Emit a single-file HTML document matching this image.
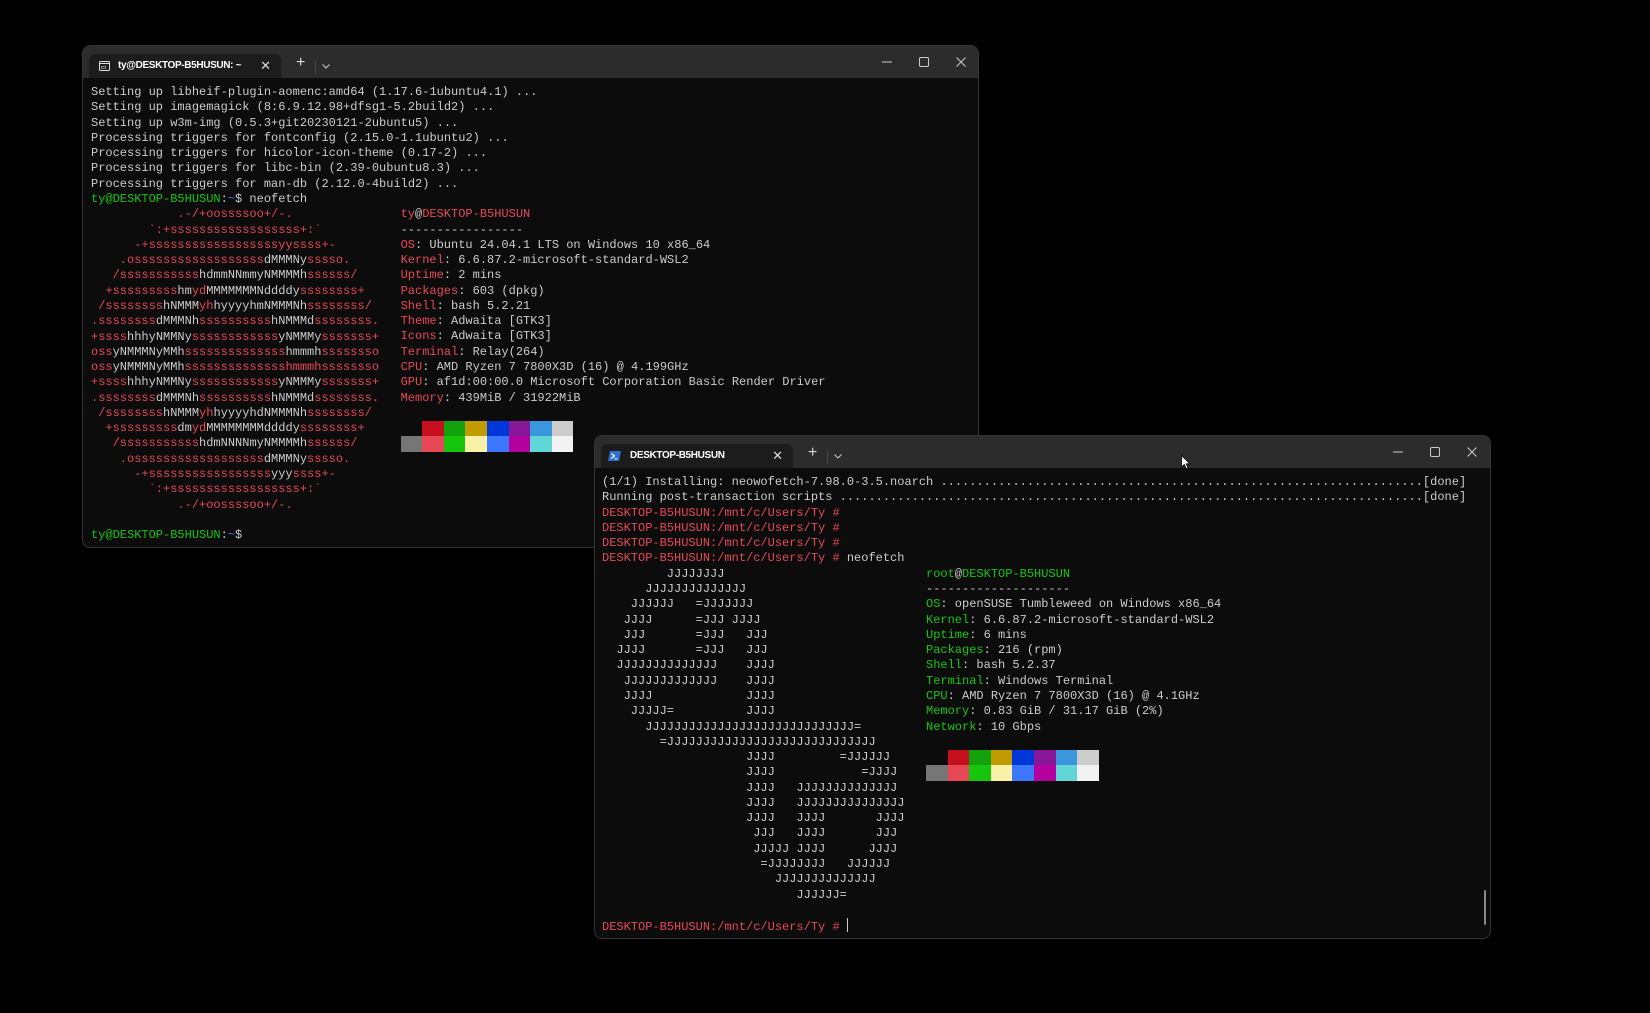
<!DOCTYPE html>
<html><head><meta charset="utf-8">
<style>
*{margin:0;padding:0;box-sizing:border-box}
html,body{width:1650px;height:1013px;background:#000;overflow:hidden;position:relative}
.win{position:absolute;background:#0c0c0c;border:1px solid #333;border-radius:8px;overflow:hidden}
.tb{position:absolute;left:0;top:0;right:0;height:32px;background:#2c2c2c}
.tab{position:absolute;top:8px;height:24px;background:#1c1c1c;border-radius:6px 6px 0 0;color:#fff;font:600 10px "Liberation Sans",sans-serif;line-height:24px;letter-spacing:-0.35px}
.tab .t{position:absolute;left:29px;top:0;white-space:nowrap}
.tab .x{position:absolute;right:10px;top:0;font-size:13px;font-weight:400;color:#ddd;letter-spacing:0}
.plus{position:absolute;top:8px;height:24px;line-height:24px;color:#ddd;font:16px "Liberation Sans",sans-serif}
.sep{position:absolute;top:14px;width:1px;height:14px;background:#444}
.term{position:absolute;font:12px "Liberation Mono",monospace;line-height:15.28px;color:#cccccc;white-space:pre}
.r{color:#e74856}.g{color:#16c60c}.b{color:#3b78ff}.w{color:#cccccc}
.c{display:inline-block;width:21.6px;height:15.28px;vertical-align:top}
</style></head><body>

<!-- Window 1 -->
<div class="win" style="left:82px;top:45px;width:897px;height:503px">
  <div class="tb"></div>
  <div class="tab" style="left:6px;width:192px">
    <svg style="position:absolute;left:10px;top:7px" width="11" height="10" viewBox="0 0 11 10"><rect x="0.5" y="0.5" width="10" height="9" rx="1" fill="none" stroke="#ddd"/><line x1="0.5" y1="2.5" x2="10.5" y2="2.5" stroke="#ddd"/><text x="2" y="8" font-size="4.5" fill="#ddd" font-family="Liberation Sans">C:\</text></svg>
    <span class="t">ty@DESKTOP-B5HUSUN: ~</span><span class="x">✕</span>
  </div>
  <div class="plus" style="left:213px">+</div>
  <div class="sep" style="left:232px"></div>
  <svg style="position:absolute;left:239px;top:18px" width="8" height="5" viewBox="0 0 8 5"><path d="M0.5 0.5L4 4L7.5 0.5" fill="none" stroke="#ccc"/></svg>
  <svg style="position:absolute;left:799px;top:15px" width="10" height="2"><line x1="0" y1="1" x2="10" y2="1" stroke="#ccc"/></svg>
  <svg style="position:absolute;left:836px;top:11px" width="10" height="10"><rect x="0.5" y="0.5" width="9" height="9" rx="1.5" fill="none" stroke="#ccc"/></svg>
  <svg style="position:absolute;left:873px;top:11px" width="10" height="10"><path d="M0.5 0.5L9.5 9.5M9.5 0.5L0.5 9.5" stroke="#ccc"/></svg>

  <div class="term" style="left:8px;top:39px">Setting up libheif-plugin-aomenc:amd64 (1.17.6-1ubuntu4.1) ...
Setting up imagemagick (8:6.9.12.98+dfsg1-5.2build2) ...
Setting up w3m-img (0.5.3+git20230121-2ubuntu5) ...
Processing triggers for fontconfig (2.15.0-1.1ubuntu2) ...
Processing triggers for hicolor-icon-theme (0.17-2) ...
Processing triggers for libc-bin (2.39-0ubuntu8.3) ...
Processing triggers for man-db (2.12.0-4build2) ...
<span class="g">ty@DESKTOP-B5HUSUN</span>:<span class="b">~</span>$ neofetch
<span class="r">            .-/+oossssoo+/-.</span>
<span class="r">        `:+ssssssssssssssssss+:`</span>
<span class="r">      -+ssssssssssssssssssyyssss+-</span>
<span class="r">    .ossssssssssssssssss</span>dMMMNy<span class="r">sssso.</span>
<span class="r">   /sssssssssss</span>hdmmNNmmyNMMMMh<span class="r">ssssss/</span>
<span class="r">  +sssssssss</span>hm<span class="r">yd</span>MMMMMMMNddddy<span class="r">ssssssss+</span>
<span class="r"> /ssssssss</span>hNMMM<span class="r">yh</span>hyyyyhmNMMMNh<span class="r">ssssssss/</span>
<span class="r">.ssssssss</span>dMMMNh<span class="r">ssssssssss</span>hNMMMd<span class="r">ssssssss.</span>
<span class="r">+ssss</span>hhhyNMMNy<span class="r">ssssssssssss</span>yNMMMy<span class="r">sssssss+</span>
<span class="r">oss</span>yNMMMNyMMh<span class="r">ssssssssssssss</span>hmmmh<span class="r">ssssssso</span>
<span class="r">oss</span>yNMMMNyMMh<span class="r">sssssssssssssshmmmhssssssso</span>
<span class="r">+ssss</span>hhhyNMMNy<span class="r">ssssssssssss</span>yNMMMy<span class="r">sssssss+</span>
<span class="r">.ssssssss</span>dMMMNh<span class="r">ssssssssss</span>hNMMMd<span class="r">ssssssss.</span>
<span class="r"> /ssssssss</span>hNMMM<span class="r">yh</span>hyyyyhdNMMMNh<span class="r">ssssssss/</span>
<span class="r">  +sssssssss</span>dm<span class="r">yd</span>MMMMMMMMddddy<span class="r">ssssssss+</span>
<span class="r">   /sssssssssss</span>hdmNNNNmyNMMMMh<span class="r">ssssss/</span>
<span class="r">    .ossssssssssssssssss</span>dMMMNy<span class="r">sssso.</span>
<span class="r">      -+sssssssssssssssss</span>yyy<span class="r">ssss+-</span>
<span class="r">        `:+ssssssssssssssssss+:`</span>
<span class="r">            .-/+oossssoo+/-.</span>

<span class="g">ty@DESKTOP-B5HUSUN</span>:<span class="b">~</span>$</div>

  <div class="term" style="left:317.6px;top:161.24px"><span class="r">ty</span>@<span class="r">DESKTOP-B5HUSUN</span>
-----------------
<span class="r">OS</span>: Ubuntu 24.04.1 LTS on Windows 10 x86_64
<span class="r">Kernel</span>: 6.6.87.2-microsoft-standard-WSL2
<span class="r">Uptime</span>: 2 mins
<span class="r">Packages</span>: 603 (dpkg)
<span class="r">Shell</span>: bash 5.2.21
<span class="r">Theme</span>: Adwaita [GTK3]
<span class="r">Icons</span>: Adwaita [GTK3]
<span class="r">Terminal</span>: Relay(264)
<span class="r">CPU</span>: AMD Ryzen 7 7800X3D (16) @ 4.199GHz
<span class="r">GPU</span>: af1d:00:00.0 Microsoft Corporation Basic Render Driver
<span class="r">Memory</span>: 439MiB / 31922MiB

<span class="c" style="background:#0c0c0c"></span><span class="c" style="background:#c50f1f"></span><span class="c" style="background:#13a10e"></span><span class="c" style="background:#c19c00"></span><span class="c" style="background:#0037da"></span><span class="c" style="background:#881798"></span><span class="c" style="background:#3a96dd"></span><span class="c" style="background:#cccccc"></span>
<span class="c" style="background:#767676"></span><span class="c" style="background:#e74856"></span><span class="c" style="background:#16c60c"></span><span class="c" style="background:#f9f1a5"></span><span class="c" style="background:#3b78ff"></span><span class="c" style="background:#b4009e"></span><span class="c" style="background:#61d6d6"></span><span class="c" style="background:#f2f2f2"></span></div>
</div>

<!-- Window 2 -->
<div class="win" style="left:594px;top:435px;width:897px;height:504px">
  <div class="tb"></div>
  <div class="tab" style="left:6px;width:192px">
    <svg style="position:absolute;left:7px;top:7px" width="13" height="10" viewBox="0 0 13 10"><path d="M2 0H13L11 10H0Z" fill="#2d6fd6"/><path d="M3.5 2.5L6.5 5L3 7.5" fill="none" stroke="#fff" stroke-width="1.2"/><line x1="6.5" y1="7.8" x2="9.5" y2="7.8" stroke="#fff" stroke-width="1"/></svg>
    <span class="t">DESKTOP-B5HUSUN</span><span class="x">✕</span>
  </div>
  <div class="plus" style="left:213px">+</div>
  <div class="sep" style="left:232px"></div>
  <svg style="position:absolute;left:239px;top:18px" width="8" height="5" viewBox="0 0 8 5"><path d="M0.5 0.5L4 4L7.5 0.5" fill="none" stroke="#ccc"/></svg>
  <svg style="position:absolute;left:798px;top:15px" width="10" height="2"><line x1="0" y1="1" x2="10" y2="1" stroke="#ccc"/></svg>
  <svg style="position:absolute;left:835px;top:11px" width="10" height="10"><rect x="0.5" y="0.5" width="9" height="9" rx="1.5" fill="none" stroke="#ccc"/></svg>
  <svg style="position:absolute;left:872px;top:11px" width="10" height="10"><path d="M0.5 0.5L9.5 9.5M9.5 0.5L0.5 9.5" stroke="#ccc"/></svg>

  <div class="term" style="left:7px;top:39px">(1/1) Installing: neowofetch-7.98.0-3.5.noarch ...................................................................[done]
Running post-transaction scripts .................................................................................[done]
<span class="r">DESKTOP-B5HUSUN:/mnt/c/Users/Ty #</span>
<span class="r">DESKTOP-B5HUSUN:/mnt/c/Users/Ty #</span>
<span class="r">DESKTOP-B5HUSUN:/mnt/c/Users/Ty #</span>
<span class="r">DESKTOP-B5HUSUN:/mnt/c/Users/Ty #</span> neofetch
         JJJJJJJJ
      JJJJJJJJJJJJJJ
    JJJJJJ   =JJJJJJJ
   JJJJ      =JJJ JJJJ
   JJJ       =JJJ   JJJ
  JJJJ       =JJJ   JJJ
  JJJJJJJJJJJJJJ    JJJJ
   JJJJJJJJJJJJJ    JJJJ
   JJJJ             JJJJ
    JJJJJ=          JJJJ
      JJJJJJJJJJJJJJJJJJJJJJJJJJJJJ=
        =JJJJJJJJJJJJJJJJJJJJJJJJJJJJJ
                    JJJJ         =JJJJJJ
                    JJJJ            =JJJJ
                    JJJJ   JJJJJJJJJJJJJJ
                    JJJJ   JJJJJJJJJJJJJJJ
                    JJJJ   JJJJ       JJJJ
                     JJJ   JJJJ       JJJ
                     JJJJJ JJJJ      JJJJ
                      =JJJJJJJJ   JJJJJJ
                        JJJJJJJJJJJJJJ
                           JJJJJJ=

<span class="r">DESKTOP-B5HUSUN:/mnt/c/Users/Ty #</span> <span style="display:inline-block;width:1px;height:14px;background:#ccc;vertical-align:-2px"></span></div>

  <div class="term" style="left:331px;top:130.7px"><span class="g">root</span>@<span class="g">DESKTOP-B5HUSUN</span>
--------------------
<span class="g">OS</span>: openSUSE Tumbleweed on Windows x86_64
<span class="g">Kernel</span>: 6.6.87.2-microsoft-standard-WSL2
<span class="g">Uptime</span>: 6 mins
<span class="g">Packages</span>: 216 (rpm)
<span class="g">Shell</span>: bash 5.2.37
<span class="g">Terminal</span>: Windows Terminal
<span class="g">CPU</span>: AMD Ryzen 7 7800X3D (16) @ 4.1GHz
<span class="g">Memory</span>: 0.83 GiB / 31.17 GiB (2%)
<span class="g">Network</span>: 10 Gbps

<span class="c" style="background:#0c0c0c"></span><span class="c" style="background:#c50f1f"></span><span class="c" style="background:#13a10e"></span><span class="c" style="background:#c19c00"></span><span class="c" style="background:#0037da"></span><span class="c" style="background:#881798"></span><span class="c" style="background:#3a96dd"></span><span class="c" style="background:#cccccc"></span>
<span class="c" style="background:#767676"></span><span class="c" style="background:#e74856"></span><span class="c" style="background:#16c60c"></span><span class="c" style="background:#f9f1a5"></span><span class="c" style="background:#3b78ff"></span><span class="c" style="background:#b4009e"></span><span class="c" style="background:#61d6d6"></span><span class="c" style="background:#f2f2f2"></span></div>

  <div style="position:absolute;left:889px;top:454px;width:2px;height:35px;background:#888;border-radius:1px"></div>
</div>

<!-- mouse cursor -->
<svg style="position:absolute;left:1181px;top:455px" width="10" height="15" viewBox="0 0 10 15"><path d="M0.5 0.5V12L3.3 9.4L5.2 13.8L7 13L5.2 8.8H9Z" fill="#fff" stroke="#000" stroke-width="0.8"/></svg>
</body></html>
